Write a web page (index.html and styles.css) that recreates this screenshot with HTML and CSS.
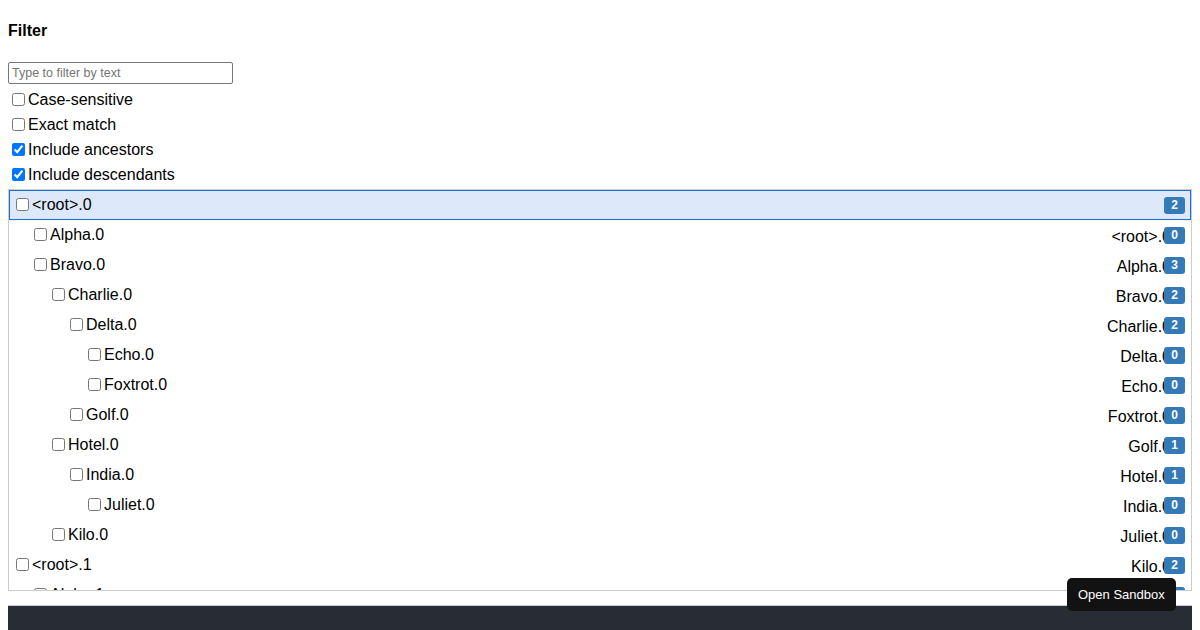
FILE: index.html
```html
<!DOCTYPE html>
<html>
<head>
<meta charset="utf-8">
<link rel="stylesheet" href="styles.css">
</head>
<body>
<h4 class="title">Filter</h4>
<input class="search" type="text" placeholder="Type to filter by text">
<div class="options">
  <label class="opt"><input type="checkbox">Case-sensitive</label>
  <label class="opt"><input type="checkbox">Exact match</label>
  <label class="opt"><input type="checkbox" checked>Include ancestors</label>
  <label class="opt"><input type="checkbox" checked>Include descendants</label>
</div>
<div class="tree">
  <div class="row lvl0 selected"><input type="checkbox"><span class="name">&lt;root&gt;.0</span><span class="meta"><span class="badge">2</span></span></div>
  <div class="row lvl1"><input type="checkbox"><span class="name">Alpha.0</span><span class="meta"><span class="ref">&lt;root&gt;.0</span><span class="badge">0</span></span></div>
  <div class="row lvl1"><input type="checkbox"><span class="name">Bravo.0</span><span class="meta"><span class="ref">Alpha.0</span><span class="badge">3</span></span></div>
  <div class="row lvl2"><input type="checkbox"><span class="name">Charlie.0</span><span class="meta"><span class="ref">Bravo.0</span><span class="badge">2</span></span></div>
  <div class="row lvl3"><input type="checkbox"><span class="name">Delta.0</span><span class="meta"><span class="ref">Charlie.0</span><span class="badge">2</span></span></div>
  <div class="row lvl4"><input type="checkbox"><span class="name">Echo.0</span><span class="meta"><span class="ref">Delta.0</span><span class="badge">0</span></span></div>
  <div class="row lvl4"><input type="checkbox"><span class="name">Foxtrot.0</span><span class="meta"><span class="ref">Echo.0</span><span class="badge">0</span></span></div>
  <div class="row lvl3"><input type="checkbox"><span class="name">Golf.0</span><span class="meta"><span class="ref">Foxtrot.0</span><span class="badge">0</span></span></div>
  <div class="row lvl2"><input type="checkbox"><span class="name">Hotel.0</span><span class="meta"><span class="ref">Golf.0</span><span class="badge">1</span></span></div>
  <div class="row lvl3"><input type="checkbox"><span class="name">India.0</span><span class="meta"><span class="ref">Hotel.0</span><span class="badge">1</span></span></div>
  <div class="row lvl4"><input type="checkbox"><span class="name">Juliet.0</span><span class="meta"><span class="ref">India.0</span><span class="badge">0</span></span></div>
  <div class="row lvl2"><input type="checkbox"><span class="name">Kilo.0</span><span class="meta"><span class="ref">Juliet.0</span><span class="badge">0</span></span></div>
  <div class="row lvl0"><input type="checkbox"><span class="name">&lt;root&gt;.1</span><span class="meta"><span class="ref">Kilo.0</span><span class="badge">2</span></span></div>
  <div class="row lvl1"><input type="checkbox"><span class="name">Alpha.1</span><span class="meta"><span class="ref">&lt;root&gt;.1</span><span class="badge">0</span></span></div>
</div>
<div class="code"><code>/</code></div>
<div class="tooltip">Open Sandbox</div>
</body>
</html>
```

FILE: styles.css
```css
html, body {
  margin: 0;
  background: #fff;
}
body {
  padding: 0 8px;
  font-family: "Liberation Sans", Arial, sans-serif;
  font-size: 16px;
  color: #000;
  height: 630px;
  overflow: hidden;
  position: relative;
}
.title {
  margin: 0;
  padding-top: 22px;
  font-size: 16px;
  line-height: 18px;
  font-weight: bold;
}
.search {
  display: block;
  margin: 22px 0 0;
  width: 225px;
  height: 22px;
  box-sizing: border-box;
  border: 1px solid #767676;
  border-radius: 2px;
  padding: 1px 3px;
  font-family: "Liberation Sans", Arial, sans-serif;
  font-size: 12.5px;
}
.search::placeholder {
  color: #757575;
}
.options {
  margin-top: 3px;
}
.opt {
  display: flex;
  align-items: center;
  height: 25px;
}
.opt input,
.row input {
  width: 13px;
  height: 13px;
  margin: 0 3px 0 4px;
}
.row input {
  margin-top: -2px;
}
.tree {
  margin-top: 2px;
  border: 1px solid #ccc;
  height: 400px;
  overflow: hidden;
}
.row {
  display: flex;
  align-items: center;
  height: 30px;
  box-sizing: border-box;
  border: 1px solid transparent;
  padding-right: 5px;
}
.row.selected {
  background: #dde9fa;
  border-color: #1b6fd3;
}
.lvl0 { padding-left: 2px; }
.lvl1 { padding-left: 20px; }
.lvl2 { padding-left: 38px; }
.lvl3 { padding-left: 56px; }
.lvl4 { padding-left: 74px; }
.meta {
  margin-left: auto;
  display: flex;
  align-items: center;
}
.ref {
  margin-top: 4px;
  white-space: nowrap;
}
.badge {
  position: relative;
  z-index: 1;
  margin-left: -7px;
  width: 21px;
  height: 17px;
  line-height: 17px;
  border-radius: 3px;
  background: #337ab7;
  color: #fff;
  font-size: 12px;
  font-weight: bold;
  text-align: center;
}
.code {
  margin-top: 14px;
  border-top: 1px solid #ccc;
  background: #282c34;
  height: 40px;
  padding: 20px 22px 0;
  box-sizing: border-box;
  font-family: "Liberation Mono", monospace;
  font-size: 14px;
  line-height: 20px;
  color: #7f8da3;
}
.tooltip {
  position: absolute;
  left: 1067px;
  top: 578px;
  background: #121212;
  color: #fff;
  font-size: 13px;
  line-height: 17px;
  padding: 8px 11px;
  border-radius: 5px;
  z-index: 5;
}
```
